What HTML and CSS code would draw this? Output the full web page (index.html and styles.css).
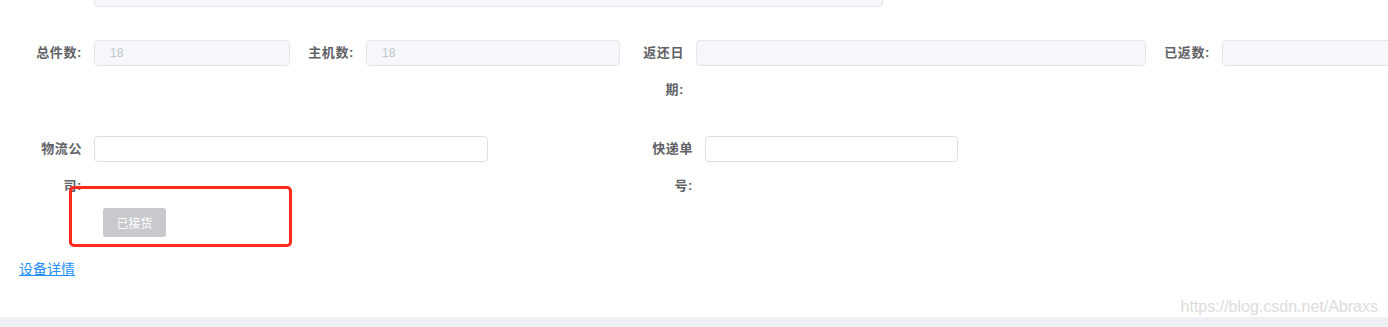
FILE: index.html
```html
<!DOCTYPE html>
<html lang="zh-CN">
<head>
<meta charset="utf-8">
<title>接货</title>
<link rel="stylesheet" href="styles.css">
</head>
<body>
<div class="page">
  <form class="form">
    <div class="row">
      <div class="item">
        <label class="label">备注:</label>
        <div class="control"><div class="input is-disabled w-789">2020 备注</div></div>
      </div>
    </div>
    <div class="row">
      <div class="item">
        <label class="label">总件数:</label>
        <div class="control"><div class="input is-disabled w-196">18</div></div>
      </div>
      <div class="item">
        <label class="label">主机数:</label>
        <div class="control"><div class="input is-disabled w-254">18</div></div>
      </div>
      <div class="item">
        <label class="label">返还日期:</label>
        <div class="control"><div class="input is-disabled w-450"></div></div>
      </div>
      <div class="item">
        <label class="label">已返数:</label>
        <div class="control"><div class="input is-disabled w-300"></div></div>
      </div>
    </div>
    <div class="row">
      <div class="item">
        <label class="label">物流公司:</label>
        <div class="control"><div class="input w-394"></div></div>
      </div>
      <div class="item item-far">
        <label class="label">快递单号:</label>
        <div class="control"><div class="input w-253"></div></div>
      </div>
    </div>
    <div class="actions">
      <button type="button" class="btn is-disabled">已接货</button>
    </div>
  </form>
  <div class="links"><a class="link" href="#">设备详情</a></div>
  <div class="band"></div>
  <div class="watermark">https://blog.csdn.net/Abraxs</div>
  <div class="annotation"></div>
</div>
</body>
</html>
```

FILE: styles.css
```css
html, body {
  margin: 0;
  padding: 0;
  background: #ffffff;
}
body {
  width: 1388px;
  height: 327px;
  overflow: hidden;
  font-family: "Liberation Sans", "Noto Sans CJK SC", sans-serif;
}
.page {
  position: relative;
  width: 1388px;
  height: 327px;
  overflow: hidden;
}
.form {
  margin: -25px 0 0 0;
  padding-left: 32px;
}
.row {
  display: flex;
  align-items: flex-start;
  column-gap: 14px;
  margin-bottom: 22px;
  white-space: nowrap;
}
.row:nth-child(3) {
  margin-bottom: 0;
}
.item {
  display: flex;
  align-items: flex-start;
  flex: none;
}
.item-far {
  margin-left: 141px;
}
.label {
  width: 62px;
  box-sizing: border-box;
  padding-right: 12px;
  text-align: right;
  line-height: 37px;
  font-size: 13px;
  letter-spacing: 0.6px;
  font-weight: bold;
  color: #606266;
  white-space: normal;
  font-family: "Liberation Sans", "Noto Sans CJK SC", sans-serif;
}
.control {
  height: 37px;
  display: flex;
  align-items: center;
}
.input {
  box-sizing: border-box;
  height: 26px;
  line-height: 24px;
  padding: 0 15px;
  border: 1px solid #dcdfe6;
  border-radius: 4px;
  background: #ffffff;
  font-size: 12px;
  color: #606266;
}
.input.is-disabled {
  background: #f5f7fa;
  border-color: #e4e7ed;
  color: #c0c4cc;
}
.w-789 { width: 789px; }
.w-196 { width: 196px; }
.w-254 { width: 254px; }
.w-450 { width: 450px; }
.w-300 { width: 300px; }
.w-394 { width: 394px; }
.w-253 { width: 253px; }
.actions {
  margin: 4px 0 0 71px;
}
.btn {
  display: block;
  height: 29px;
  width: 63px;
  padding: 0;
  border: none;
  border-radius: 3px;
  background: #c8c9cc;
  color: #ffffff;
  font-size: 12px;
  font-family: "Liberation Sans", "Noto Sans CJK SC", sans-serif;
}
.links {
  margin: 22px 0 0 19px;
  line-height: 20px;
}
.link {
  font-size: 14px;
  color: #1e90ff;
  text-decoration: underline;
}
.band {
  margin-top: 38px;
  height: 12px;
  background: #eef0f4;
}
.watermark {
  position: absolute;
  right: 10px;
  top: 298px;
  font-size: 16px;
  color: #dcdcdc;
  font-family: "Liberation Sans", sans-serif;
}
.annotation {
  position: absolute;
  left: 69px;
  top: 186px;
  width: 223px;
  height: 61px;
  box-sizing: border-box;
  border: 3px solid #ff2a1a;
  border-radius: 5px;
}
```
